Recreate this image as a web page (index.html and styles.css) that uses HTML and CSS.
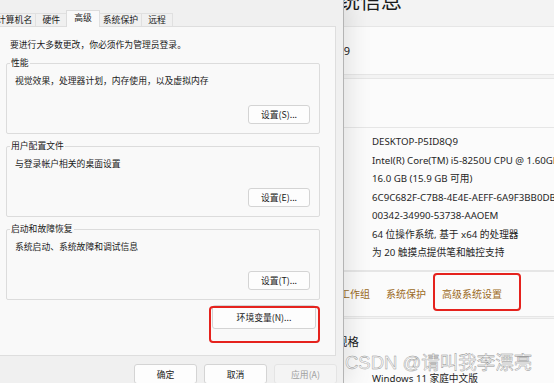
FILE: index.html
```html
<!DOCTYPE html>
<html lang="zh-CN">
<head>
  <meta charset="UTF-8">
  <meta name="viewport" content="width=device-width, initial-scale=1.0">
  <title>系统属性 - 高级</title>
  <link rel="stylesheet" href="styles.css">
</head>
<body>
  <div class="settings">
    <h1 class="settings-title">系统信息</h1>
    <div class="card card-name">
      <div class="device-name-box"><span>DESKTOP-P5ID8Q9</span></div>
    </div>
    <div class="card card-head"></div>
    <div class="card spec-list">
      <div class="spec-row">DESKTOP-P5ID8Q9</div>
      <div class="spec-row">Intel(R) Core(TM) i5-8250U CPU @ 1.60GHz   1.80 GHz</div>
      <div class="spec-row">16.0 GB (15.9 GB 可用)</div>
      <div class="spec-row">6C9C682F-C7B8-4E4E-AEFF-6A9F3BB0DB4E</div>
      <div class="spec-row">00342-34990-53738-AAOEM</div>
      <div class="spec-row">64 位操作系统, 基于 x64 的处理器</div>
      <div class="spec-row">为 20 触摸点提供笔和触控支持</div>
    </div>
    <div class="card related-links">
      <a href="#">域或工作组</a>
      <a href="#">系统保护</a>
      <a href="#">高级系统设置</a>
    </div>
    <div class="card win-spec">
      <div class="win-spec-title">Windows 规格</div>
      <div class="spec-row">Windows 11 家庭中文版</div>
    </div>
  </div>

  <div class="dialog">
    <div class="tabs">
      <div class="tab">计算机名</div>
      <div class="tab">硬件</div>
      <div class="tab tab-active">高级</div>
      <div class="tab">系统保护</div>
      <div class="tab">远程</div>
    </div>
    <div class="panel">
      <p class="notice">要进行大多数更改，你必须作为管理员登录。</p>
      <fieldset class="group">
        <legend>性能</legend>
        <div class="group-desc">视觉效果，处理器计划，内存使用，以及虚拟内存</div>
        <div class="group-actions"><button class="btn">设置(S)...</button></div>
      </fieldset>
      <fieldset class="group">
        <legend>用户配置文件</legend>
        <div class="group-desc">与登录帐户相关的桌面设置</div>
        <div class="group-actions"><button class="btn">设置(E)...</button></div>
      </fieldset>
      <fieldset class="group">
        <legend>启动和故障恢复</legend>
        <div class="group-desc">系统启动、系统故障和调试信息</div>
        <div class="group-actions"><button class="btn">设置(T)...</button></div>
      </fieldset>
      <div class="env-row"><button class="btn btn-wide">环境变量(N)...</button></div>
    </div>
    <div class="dialog-actions">
      <button class="btn btn-main">确定</button>
      <button class="btn btn-main">取消</button>
      <button class="btn btn-main" disabled>应用(A)</button>
    </div>
  </div>

  <div class="mark mark-env"></div>
  <div class="mark mark-link"></div>
  <div class="watermark">CSDN @请叫我李漂亮</div>
</body>
</html>
```

FILE: styles.css
```css
body {
  margin: 0;
  width: 554px;
  height: 383px;
  overflow: hidden;
  position: relative;
  background-color: #f3f3f3;
  font-family: "Noto Sans CJK SC", sans-serif;
}

/* settings window behind the dialog */
.settings {
  padding-left: 280px;
  color: #1b1b1b;
  font-family: "Noto Sans", "Noto Sans CJK SC", sans-serif;
}
.settings-title {
  margin: -11px 0 16px;
  padding-left: 38px;
  font-family: "Noto Sans CJK SC", sans-serif;
  font-size: 21px;
  line-height: 21px;
  font-weight: 400;
  white-space: nowrap;
}
.card {
  width: 400px;
  box-sizing: border-box;
  background-color: #fbfbfb;
  border: 1px solid #e6e6e6;
  border-radius: 4px;
}
.card-name {
  height: 49px;
  display: flex;
  align-items: center;
}
.device-name-box {
  width: 69px;
  display: flex;
  justify-content: flex-end;
  white-space: nowrap;
  font-size: 11px;
}
.card-head {
  height: 50px;
  margin-top: 3px;
  border-radius: 4px 4px 0 0;
}
.spec-list {
  margin-top: -1px;
  border-radius: 0 0 4px 4px;
  padding: 5px 0 7px;
}
.spec-row {
  height: 18.5px;
  padding-left: 91px;
  line-height: 18.5px;
  font-size: 9.7px;
  white-space: nowrap;
  color: #262626;
}
.related-links {
  height: 46px;
  display: flex;
  align-items: center;
  gap: 16px;
  padding-left: 39px;
  border-radius: 0;
  font-family: "Noto Sans CJK SC", sans-serif;
  font-size: 10px;
}
.related-links a {
  color: #9c6a24;
  text-decoration: none;
  white-space: nowrap;
}
.win-spec {
  margin-top: 1px;
  padding-top: 15px;
  height: 80px;
}
.win-spec-title {
  padding-left: 3px;
  font-size: 11.5px;
  line-height: 16px;
  font-weight: 400;
  margin-bottom: 20px;
}

/* system properties dialog */
.dialog {
  position: absolute;
  left: 0;
  top: 0;
  width: 344px;
  height: 383px;
  box-sizing: border-box;
  background-color: #f0f0f0;
  border-right: 1px solid #b4b4b4;
  box-shadow: 6px 0 22px rgba(0, 0, 0, 0.10);
  font-size: 8.8px;
  color: #1a1a1a;
}
.tabs {
  display: flex;
  align-items: flex-end;
  height: 26px;
  margin-left: -7px;
  position: relative;
  z-index: 1;
}
.tab {
  height: 13px;
  line-height: 12px;
  padding: 0 3px;
  min-width: 32px;
  box-sizing: border-box;
  text-align: center;
  white-space: nowrap;
  border: 1px solid #e0e0e0;
  border-bottom: none;
  background-color: #f0f0f0;
  margin-right: -1px;
}
.tab-active {
  height: 17px;
  line-height: 14px;
  padding: 0 7px;
  margin-bottom: -1px;
  background-color: #f9f9f9;
  border-color: #dcdcdc;
}
.panel {
  margin-left: -1px;
  width: 337px;
  height: 330px;
  box-sizing: border-box;
  border: 1px solid #dedede;
  background-color: #f9f9f9;
  padding-top: 12px;
}
.notice {
  margin: 0 0 6px 10px;
  line-height: 12px;
}
.group {
  margin: 6px 15px 0 6px;
  padding: 6px 9px 9px 8px;
  border: 1px solid #dcdcdc;
  border-radius: 2px;
}
.group legend {
  padding: 0 1px;
  margin-left: -5px;
  line-height: 12px;
}
.group-desc {
  line-height: 12px;
}
.group-actions {
  display: flex;
  justify-content: flex-end;
  margin-top: 18px;
}
.btn {
  height: 19px;
  min-width: 62px;
  padding: 0 8px;
  box-sizing: border-box;
  border: 1px solid #d4d4d4;
  border-radius: 3px;
  background-color: #fdfdfd;
  font: inherit;
  line-height: 17px;
  color: inherit;
}
.btn-wide {
  width: 104px;
  height: 24px;
  line-height: 20px;
  padding-top: 1px;
}
.env-row {
  display: flex;
  justify-content: flex-end;
  margin: 5px 19px 0 0;
}
.dialog-actions {
  display: flex;
  justify-content: flex-end;
  gap: 7px;
  padding: 8px 6px 0 0;
}
.btn-main {
  width: 63px;
  height: 20px;
}
.btn:disabled {
  color: #a0a0a0;
  background-color: #f4f4f4;
  border-color: #e4e4e4;
}

/* red annotation boxes */
.mark {
  position: absolute;
  box-sizing: border-box;
  border: 2px solid #e5221d;
  border-radius: 4px;
}
.mark-env {
  left: 209px;
  top: 306px;
  width: 111px;
  height: 37px;
}
.mark-link {
  left: 433px;
  top: 273px;
  width: 88px;
  height: 38px;
}

.watermark {
  position: absolute;
  left: 345px;
  top: 351px;
  font-family: "Liberation Sans", "Noto Sans CJK SC", sans-serif;
  font-size: 18.5px;
  line-height: 24px;
  color: rgba(250, 250, 250, 0.85);
  -webkit-text-stroke: 0.4px #8c8c8c;
  white-space: nowrap;
}
```
